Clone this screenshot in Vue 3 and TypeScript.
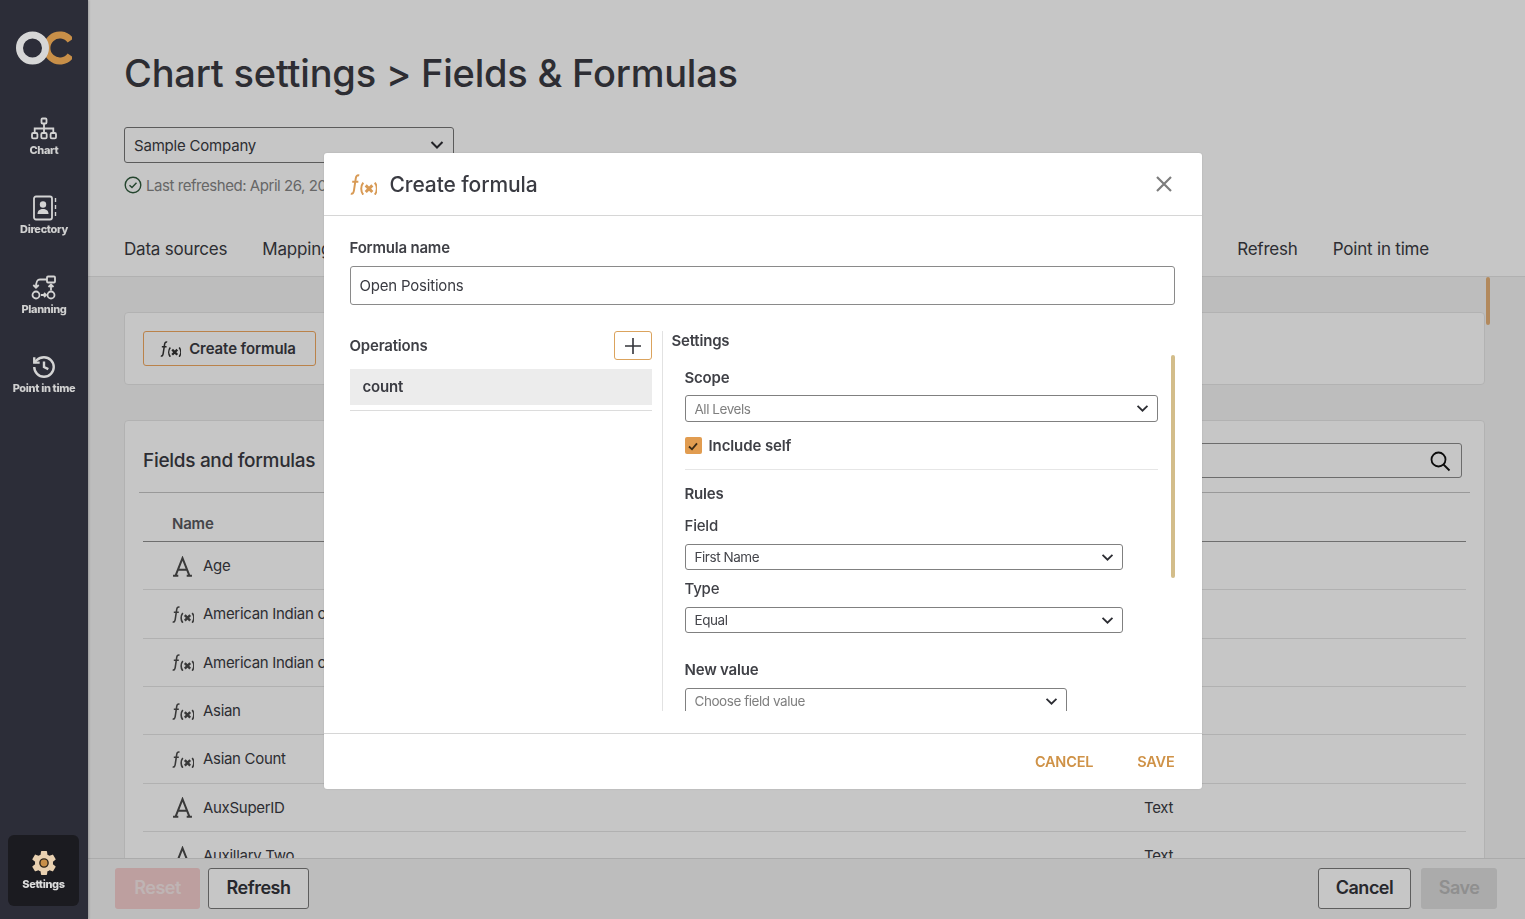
<script setup lang="ts">
import { ref } from 'vue';

type Row = { name: string; kind: 'text' | 'formula'; type: string };

const formulaName = ref('Open Positions');
const includeSelf = ref(true);

const leftTabs = ['Data sources', 'Mapping', 'Fields & Formulas'];
const rightTabs = ['Refresh', 'Point in time'];

const rows: Row[] = [
    { name: 'Age', kind: 'text', type: 'Text' },
    { name: 'American Indian or Alaska Native', kind: 'formula', type: 'Number' },
    { name: 'American Indian or Alaska Native Count', kind: 'formula', type: 'Number' },
    { name: 'Asian', kind: 'formula', type: 'Number' },
    { name: 'Asian Count', kind: 'formula', type: 'Number' },
    { name: 'AuxSuperID', kind: 'text', type: 'Text' },
    { name: 'Auxillary Two', kind: 'text', type: 'Text' },
];
</script>

<template>
    <div class="page">
        <nav class="sidebar">
            <svg class="logo" viewBox="0 0 56 34" width="56" height="34">
                <path d="M54.500 9.500A13 13 0 1 0 54.500 24.500" fill="none" stroke="#c88f48" stroke-width="7" />
                <circle cx="16.500" cy="17" r="13" fill="none" stroke="#d6d6d6" stroke-width="7" />
            </svg>
            <a class="nav-item">
                <svg viewBox="0 -1 28 26" width="28" height="26" fill="none" stroke="#d4d4d4" stroke-width="1.800">
                    <rect x="11.500" y="1.500" width="5" height="5" rx="1" />
                    <rect x="2" y="16" width="5.400" height="5.400" rx="1.200" />
                    <rect x="11.300" y="16" width="5.400" height="5.400" rx="1.200" />
                    <rect x="20.600" y="16" width="5.400" height="5.400" rx="1.200" />
                    <path d="M14 6.500V16M4.700 16v-4.500h18.600V16" />
                </svg>
                <span>Chart</span>
            </a>
            <a class="nav-item">
                <svg viewBox="0 0 28 26" width="28" height="26" fill="none" stroke="#d4d4d4" stroke-width="1.800">
                    <rect x="4" y="1.500" width="18" height="23" rx="2" />
                    <circle cx="13" cy="9.500" r="3.200" fill="#d4d4d4" stroke="none" />
                    <path d="M7.500 19c0-3.600 2.500-5 5.500-5s5.500 1.400 5.500 5z" fill="#d4d4d4" stroke="none" />
                    <path d="M25.500 3v4M25.500 10v4M25.500 17v4" stroke-width="1.400" />
                </svg>
                <span>Directory</span>
            </a>
            <a class="nav-item">
                <svg viewBox="0 0 28 26" width="28" height="26" fill="none" stroke="#d4d4d4" stroke-width="1.800">
                    <rect x="17" y="1.500" width="8" height="6" rx="1" />
                    <path d="M17 4.500H10C7 4.500 6 6.500 6 12.500" />
                    <path d="M3.300 10l2.700 2.700L8.700 10" />
                    <circle cx="6" cy="20" r="3.500" />
                    <circle cx="21" cy="20" r="3.500" />
                    <path d="M11 20h5M14 18l2 2-2 2M21 15.500V9.500M18.500 12L21 9.500l2.500 2.500" />
                </svg>
                <span>Planning</span>
            </a>
            <a class="nav-item">
                <svg viewBox="0 0 24 24" width="28" height="26" fill="none" stroke="#d4d4d4" stroke-width="2.200">
                    <path d="M3 12a9 9 0 1 0 9-9 9.750 9.750 0 0 0-6.740 2.740L3 8" />
                    <path d="M3 3v5h5" />
                    <path d="M12 7v5l4 2" />
                </svg>
                <span>Point in time</span>
            </a>
            <a class="nav-item settings-item">
                <svg viewBox="0 0 24 24" width="30" height="30">
                    <path fill="#e8d0b0" d="M19.140 12.940c.04-.3.060-.61.060-.94 0-.32-.02-.64-.07-.94l2.030-1.580a.49.49 0 0 0 .12-.61l-1.920-3.320a.488.488 0 0 0-.59-.22l-2.390.96c-.5-.38-1.030-.7-1.620-.94l-.36-2.540a.484.484 0 0 0-.48-.41h-3.840c-.24 0-.43.17-.47.41l-.36 2.540c-.59.24-1.130.57-1.620.94l-2.390-.96c-.22-.08-.47 0-.59.22L2.740 8.870c-.12.21-.08.47.12.61l2.030 1.580c-.05.3-.09.63-.09.94s.02.64.07.94l-2.030 1.580a.49.49 0 0 0-.12.61l1.920 3.320c.12.22.37.29.59.22l2.390-.96c.5.38 1.030.7 1.620.94l.36 2.540c.05.24.24.41.48.41h3.840c.24 0 .44-.17.47-.41l.36-2.540c.59-.24 1.130-.56 1.620-.94l2.390.96c.22.08.47 0 .59-.22l1.920-3.320c.12-.22.07-.47-.12-.61l-2.010-1.580z" />
                    <circle cx="12" cy="12" r="3.300" fill="#c88f48" stroke="#2a2218" stroke-width="1.100" />
                </svg>
                <span>Settings</span>
            </a>
        </nav>

        <main class="main">
            <header class="header">
                <h1>Chart settings &gt; Fields &amp; Formulas</h1>
                <div class="company-select">
                    <span>Sample Company</span>
                    <svg class="chevron" viewBox="0 0 14 10" width="14" height="10"><path d="M1.500 2L7 7.500 12.500 2" /></svg>
                </div>
                <div class="refreshed">
                    <svg viewBox="0 0 18 18" width="18" height="18" fill="none" stroke="#2f5a3c" stroke-width="1.400">
                        <circle cx="9" cy="9" r="7.800" />
                        <path d="M5.500 9.200L8 11.600l4.500-4.800" />
                    </svg>
                    <span>Last refreshed: April 26, 2024 at 3:41 PM</span>
                </div>
                <div class="tabs">
                    <a v-for="tab in leftTabs" :key="tab">{{ tab }}</a>
                    <a v-for="(tab, i) in rightTabs" :key="tab" :class="{ 'push-right': i === 0 }">{{ tab }}</a>
                </div>
            </header>

            <section class="content">
                <div class="thumb"></div>
                <div class="card action-card">
                    <button class="create-btn">
                        <svg class="fx" viewBox="0 0 22 17" width="21" height="16"><path d="M7.500 1.200C6 .7 5 1.500 4.700 3.500L3.200 13.500C2.900 15.500 2 16.300 .7 15.800M1.800 6.200h5" /><path d="M10.800 7c-2.200 2.800-2.200 7 0 9.800M20.200 7c2.200 2.800 2.200 7 0 9.800" stroke-width="1.600" /><path d="M12.800 9.200l5.400 5.400M18.200 9.200l-5.400 5.400" stroke-width="2.400" /></svg>
                        Create formula
                    </button>
                </div>
                <div class="card table-card">
                    <div class="table-head">
                        <h2>Fields and formulas</h2>
                        <div class="search">
                            <svg viewBox="0 0 24 24" width="24" height="24" fill="none" stroke="#111" stroke-width="1.800"><circle cx="10.500" cy="10.500" r="7" /><path d="M15.500 15.500L21.500 21.500" /></svg>
                        </div>
                    </div>
                    <div class="columns"><span class="name-col">Name</span></div>
                    <div v-for="row in rows" :key="row.name" class="row">
                        <span class="row-icon">
                            <svg v-if="row.kind === 'text'" viewBox="0 0 20 20" width="21" height="21" fill="none" stroke="#4a4a4a" stroke-width="1.900"><path d="M3.500 18.500L10 2l6.500 16.500M5.500 13h9M1 18.700h5M14 18.700h5" /></svg>
                            <svg v-else class="fx grey" viewBox="0 0 22 17" width="22" height="17"><path d="M7.500 1.200C6 .7 5 1.500 4.700 3.500L3.200 13.500C2.900 15.500 2 16.300 .7 15.800M1.800 6.200h5" /><path d="M10.800 7c-2.200 2.800-2.200 7 0 9.800M20.200 7c2.200 2.800 2.200 7 0 9.800" stroke-width="1.600" /><path d="M12.800 9.200l5.400 5.400M18.200 9.200l-5.400 5.400" stroke-width="2.400" /></svg>
                        </span>
                        <span class="row-name">{{ row.name }}</span>
                        <span class="row-type">{{ row.type }}</span>
                    </div>
                </div>
            </section>

            <footer class="footer">
                <button class="btn reset">Reset</button>
                <button class="btn refresh">Refresh</button>
                <button class="btn cancel push-right">Cancel</button>
                <button class="btn disabled">Save</button>
            </footer>
        </main>

        <div class="overlay">
            <div class="modal">
                <div class="modal-head">
                    <svg class="fx orange" viewBox="0 0 22 17" width="27" height="21"><path d="M7.500 1.200C6 .7 5 1.500 4.700 3.500L3.200 13.500C2.900 15.500 2 16.300 .7 15.800M1.800 6.200h5" /><path d="M10.800 7c-2.200 2.800-2.200 7 0 9.800M20.200 7c2.200 2.800 2.200 7 0 9.800" stroke-width="1.600" /><path d="M12.800 9.200l5.400 5.400M18.200 9.200l-5.400 5.400" stroke-width="2.400" /></svg>
                    <h3>Create formula</h3>
                    <svg class="close" viewBox="0 0 16 16" width="16" height="16"><path d="M1 1l14 14M15 1L1 15" /></svg>
                </div>
                <div class="modal-body">
                    <label class="label name-label">Formula name</label>
                    <input v-model="formulaName" class="name-input" />
                    <div class="split">
                        <div class="ops">
                            <div class="ops-head">
                                <span class="label">Operations</span>
                                <button class="add-btn">
                                    <svg viewBox="0 0 16 16" width="16" height="16"><path d="M8 0v16M0 8h16" /></svg>
                                </button>
                            </div>
                            <div class="op-item">count</div>
                        </div>
                        <div class="settings">
                            <div class="label settings-title">Settings</div>
                            <div class="settings-scroll">
                                <div class="label scope-label">Scope</div>
                                <div class="select scope placeholder">
                                    <span>All Levels</span>
                                    <svg class="chevron" viewBox="0 0 14 10" width="13" height="9"><path d="M1.500 2L7 7.500 12.500 2" /></svg>
                                </div>
                                <label class="include" @click.prevent="includeSelf = !includeSelf">
                                    <span class="check">
                                        <svg v-if="includeSelf" viewBox="0 0 12 12" width="12" height="12"><path d="M2 6.500L5 9.300l5-6" /></svg>
                                    </span>
                                    Include self
                                </label>
                                <div class="rule-line"></div>
                                <div class="label rules-label">Rules</div>
                                <div class="label field-label">Field</div>
                                <div class="select narrow">
                                    <span>First Name</span>
                                    <svg class="chevron" viewBox="0 0 14 10" width="13" height="9"><path d="M1.500 2L7 7.500 12.500 2" /></svg>
                                </div>
                                <div class="label type-label">Type</div>
                                <div class="select narrow">
                                    <span>Equal</span>
                                    <svg class="chevron" viewBox="0 0 14 10" width="13" height="9"><path d="M1.500 2L7 7.500 12.500 2" /></svg>
                                </div>
                                <div class="label value-label">New value</div>
                                <div class="select narrower placeholder">
                                    <span>Choose field value</span>
                                    <svg class="chevron" viewBox="0 0 14 10" width="13" height="9"><path d="M1.500 2L7 7.500 12.500 2" /></svg>
                                </div>
                            </div>
                            <div class="modal-thumb"></div>
                        </div>
                    </div>
                </div>
                <div class="modal-foot">
                    <a>CANCEL</a>
                    <a>SAVE</a>
                </div>
            </div>
        </div>
    </div>
</template>

<style>
html,
body {
    margin: 0;
    height: 100%;
    overflow: hidden;
}
</style>

<style scoped>
.page {
    display: flex;
    width: 1525px;
    height: 919px;
    overflow: hidden;
    font-family: Inter, "Noto Sans", sans-serif;
    color: #3a3b42;
}
.sidebar {
    position: relative;
    z-index: 2;
    flex: 0 0 88px;
    box-sizing: border-box;
    display: flex;
    flex-direction: column;
    align-items: center;
    background: #2c2d38;
    padding-top: 31px;
    box-shadow: 1px 0 2px rgba(0, 0, 0, 0.2);
}
.logo {
    flex: none;
    margin-bottom: 51px;
}
.nav-item {
    width: 71px;
    height: 79.300px;
    display: flex;
    flex-direction: column;
    align-items: center;
    color: #d0d0d0;
    font-size: 11px;
    font-weight: 800;
    letter-spacing: -0.35px;
    white-space: nowrap;
}
.nav-item svg {
    flex: none;
}
.nav-item span {
    line-height: 14px;
    margin-top: 1px;
}
.nav-item.settings-item {
    margin-top: auto;
    margin-right: 1px;
    margin-bottom: 13px;
    height: 71px;
    box-sizing: border-box;
    padding-top: 13px;
    border-radius: 6px;
    background: #1b1b20;
    color: #dcdcdc;
}
.settings-item span {
    margin-top: -1px;
}

.main {
    flex: 1;
    min-width: 0;
    display: flex;
    flex-direction: column;
    background: #f4f4f4;
}
.header {
    flex: 0 0 277px;
    box-sizing: border-box;
    padding: 48px 36px 0;
    background: #fff;
    border-bottom: 1px solid #e4e4e4;
}
h1 {
    margin: 0;
    font-size: 38px;
    line-height: 50px;
    font-weight: 500;
    letter-spacing: -0.2px;
    white-space: nowrap;
}
.company-select {
    box-sizing: border-box;
    width: 330px;
    height: 36px;
    margin-top: 29px;
    padding: 0 9px;
    display: flex;
    align-items: center;
    justify-content: space-between;
    background: #fff;
    border: 1px solid #767676;
    border-radius: 3px;
    font-size: 15px;
    letter-spacing: -0.2px;
}
.refreshed {
    display: flex;
    align-items: center;
    gap: 4px;
    margin-top: 13px;
    height: 18px;
    font-size: 15px;
    letter-spacing: -0.45px;
    color: #858585;
    white-space: nowrap;
}
.tabs {
    display: flex;
    gap: 35px;
    margin-top: 43px;
    padding-right: 60px;
    font-size: 17px;
    letter-spacing: -0.2px;
    line-height: 24px;
}
.push-right {
    margin-left: auto;
}

.content {
    position: relative;
    flex: 1;
    min-height: 0;
    overflow: hidden;
    padding: 35px 40px 0 36px;
}
.thumb {
    position: absolute;
    top: 0;
    right: 35px;
    width: 4px;
    height: 48px;
    border-radius: 2px;
    background: #e6b178;
}
.card {
    box-sizing: border-box;
    background: #fff;
    border: 1px solid #e6e6e6;
    border-radius: 4px;
}
.action-card {
    height: 73px;
    padding: 18px;
}
.create-btn {
    width: 173px;
    height: 35px;
    display: flex;
    align-items: center;
    justify-content: center;
    gap: 8px;
    padding: 0 3px 0 0;
    background: #fff;
    border: 1px solid #f0a860;
    border-radius: 3px;
    font: 600 15px Inter, sans-serif;
    letter-spacing: -0.1px;
    color: #3a3b42;
}
.table-card {
    margin-top: 35px;
    padding: 0 18px;
}
.table-head {
    box-sizing: border-box;
    height: 72px;
    margin: 0 -4px;
    padding: 8px 4px 0;
    display: flex;
    align-items: center;
    justify-content: space-between;
    border-bottom: 1px solid #c6c6c6;
}
h2 {
    margin: 0;
    font-size: 19px;
    font-weight: 500;
    letter-spacing: -0.3px;
}
.search {
    box-sizing: border-box;
    width: 400px;
    height: 35px;
    margin-right: 4px;
    padding-right: 9px;
    display: flex;
    align-items: center;
    justify-content: flex-end;
    border: 1px solid #8c8c8c;
    border-radius: 3px;
}
.columns {
    box-sizing: border-box;
    height: 49px;
    padding: 12px 29px 0;
    display: flex;
    align-items: center;
    font-size: 15px;
    font-weight: 600;
    letter-spacing: -0.2px;
    color: #5a5a60;
    border-bottom: 1px solid #8e8e8e;
}
.row {
    box-sizing: border-box;
    height: 48.330px;
    display: flex;
    align-items: center;
    padding-left: 29px;
    border-bottom: 1px solid #e4e4e4;
    font-size: 15px;
    letter-spacing: -0.3px;
}
.row-icon {
    width: 31px;
    display: flex;
    padding-top: 1px;
}
.row-name {
    flex: 0 0 941px;
}
.fx {
    fill: none;
    stroke: #333;
    stroke-width: 1.600;
}
.fx.grey {
    stroke: #4a4a4a;
}
.fx.orange {
    stroke: #d89a55;
}
.footer {
    flex: 0 0 61px;
    box-sizing: border-box;
    display: flex;
    align-items: center;
    gap: 8px;
    padding: 0 28px 2px 27px;
    background: #f4f4f4;
    border-top: 1px solid #dcdcdc;
}
.btn {
    height: 41px;
    padding: 0 0 2px;
    background: #fff;
    border: 1px solid #7a7a7a;
    border-radius: 3px;
    font: 600 18px Inter, sans-serif;
    letter-spacing: -0.5px;
    color: #33343a;
}
.btn.refresh {
    width: 101px;
}
.btn.cancel {
    width: 93px;
}
.btn.reset {
    width: 85px;
    border: 0;
    background: #f4cdcd;
    color: #f6e8e8;
}
.btn.disabled {
    width: 76px;
    margin-left: 2px;
    border: 0;
    background: #dcdcdc;
    color: #b8b8b8;
}

.overlay {
    position: fixed;
    inset: 0;
    z-index: 1;
    display: flex;
    justify-content: center;
    align-items: flex-start;
    padding-top: 153px;
    background: rgba(0, 0, 0, 0.225);
}
.modal {
    width: 878px;
    height: 636px;
    display: flex;
    flex-direction: column;
    background: #fff;
    border-radius: 3px;
    box-shadow: 0 0 2px rgba(0, 0, 0, 0.15);
}
.modal-head {
    flex: 0 0 63px;
    box-sizing: border-box;
    display: flex;
    align-items: center;
    gap: 13px;
    padding: 0 30px 0 26px;
    border-bottom: 1px solid #d6d6d6;
}
h3 {
    flex: 1;
    margin: 0;
    font-size: 21px;
    font-weight: 500;
    letter-spacing: -0.1px;
    color: #3a3b42;
}
.close {
    fill: none;
    stroke: #7d7d7d;
    stroke-width: 2.200;
}
.modal-body {
    flex: 1;
    min-height: 0;
    box-sizing: border-box;
    padding: 23px 27px 22px 26px;
    display: flex;
    flex-direction: column;
    border-bottom: 1px solid #d6d6d6;
}
.label {
    font-size: 15px;
    line-height: 18px;
    font-weight: 600;
    letter-spacing: -0.2px;
    color: #3f4046;
}
.name-label {
    display: block;
}
.name-input {
    box-sizing: border-box;
    width: 825px;
    height: 39px;
    margin-top: 9px;
    padding: 0 9px;
    border: 1px solid #8a8a8a;
    border-radius: 3px;
    font: 400 15px Inter, sans-serif;
    letter-spacing: -0.2px;
    color: #3a3b42;
    outline: none;
}
.split {
    flex: 1;
    min-height: 0;
    margin-top: 26px;
    display: grid;
    grid-template-columns: 302px 1fr;
    column-gap: 10px;
}
.ops-head {
    height: 29px;
    display: flex;
    align-items: center;
    justify-content: space-between;
    padding-bottom: 1px;
}
.add-btn {
    box-sizing: border-box;
    width: 38px;
    height: 29px;
    padding: 0;
    display: flex;
    align-items: center;
    justify-content: center;
    background: #fff;
    border: 1px solid #dba35d;
    border-radius: 3px;
}
.add-btn path {
    stroke: #33343a;
    stroke-width: 1.600;
    fill: none;
}
.op-item {
    box-sizing: border-box;
    height: 36px;
    margin-top: 8px;
    padding: 0 13px 2px;
    display: flex;
    align-items: center;
    background: #ececec;
    font-size: 15px;
    font-weight: 600;
    letter-spacing: -0.2px;
    box-shadow: 0 5px 0 #fff, 0 6px 0 #dcdcdc;
}
.settings {
    position: relative;
    min-height: 0;
    overflow: hidden;
    padding-left: 9px;
    border-left: 1px solid #e2e2e2;
}
.settings-title {
    margin-top: 1px;
}
.settings-scroll {
    padding: 0 17px 0 13px;
}
.scope-label {
    margin-top: 19px;
}
.select {
    box-sizing: border-box;
    height: 26px;
    margin-top: 9px;
    padding: 0 8px 0 9px;
    display: flex;
    align-items: center;
    justify-content: space-between;
    border: 1px solid #808080;
    border-radius: 3px;
    font-size: 13.500px;
    letter-spacing: -0.45px;
    color: #44454b;
}
.select.scope {
    height: 27px;
    margin-top: 8px;
}
.select.placeholder {
    color: #7f7f7f;
}
.select.narrow {
    width: 438px;
}
.select.narrower {
    width: 382px;
}
.chevron {
    fill: none;
    stroke: #2c2d33;
    stroke-width: 2;
}
.include {
    display: flex;
    align-items: center;
    gap: 7px;
    margin-top: 14px;
    font-size: 15px;
    font-weight: 600;
    letter-spacing: -0.1px;
    color: #3f4046;
}
.check {
    width: 17px;
    height: 17px;
    display: flex;
    align-items: center;
    justify-content: center;
    background: #e19c50;
    border-radius: 2px;
}
.check path {
    fill: none;
    stroke: #3a2a16;
    stroke-width: 1.800;
}
.rule-line {
    height: 1px;
    margin-top: 14px;
    background: #e6e6e6;
}
.rules-label {
    margin-top: 15px;
}
.field-label {
    margin-top: 14px;
    font-weight: 500;
}
.type-label {
    margin-top: 10px;
    font-weight: 500;
}
.value-label {
    margin-top: 28px;
}
.modal-thumb {
    position: absolute;
    top: 24px;
    right: 0;
    width: 4px;
    height: 223px;
    border-radius: 2px;
    background: #d3bd8a;
}
.modal-foot {
    flex: 0 0 55px;
    display: flex;
    align-items: center;
    justify-content: flex-end;
    gap: 44px;
    padding-right: 27px;
    font-size: 14.500px;
    font-weight: 600;
    letter-spacing: -0.2px;
    color: #cf9247;
}
</style>
